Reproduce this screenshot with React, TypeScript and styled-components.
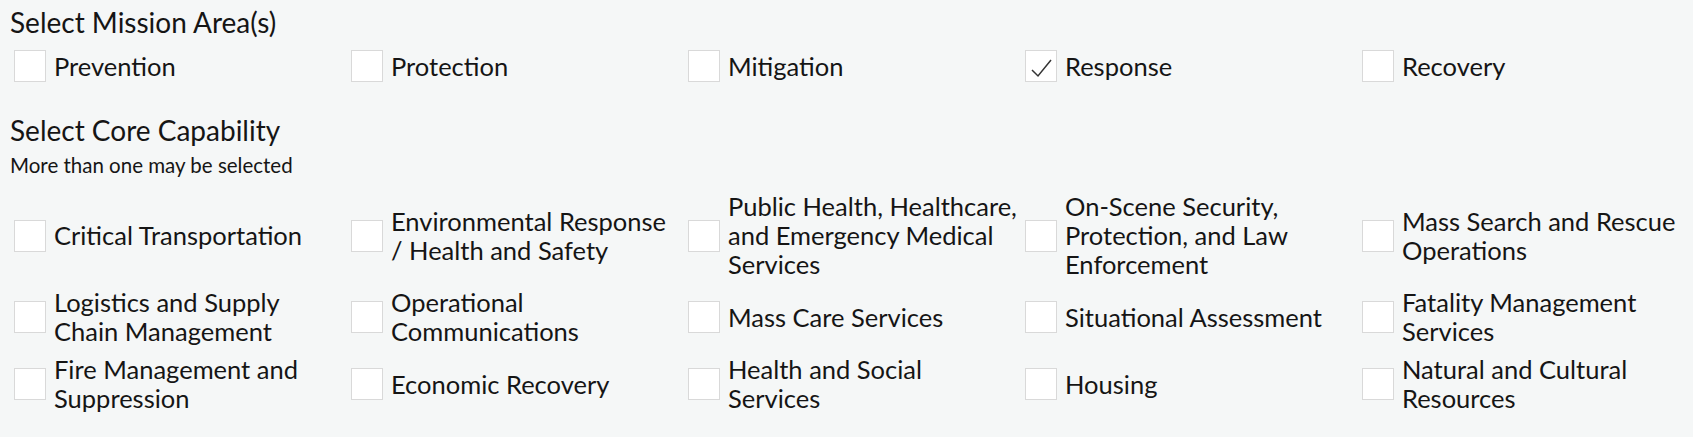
import React, { useState } from 'react';
import styled, { createGlobalStyle } from 'styled-components';

const GlobalStyle = createGlobalStyle`
  body {
    margin: 0;
    background: #f5f7f7;
    font-family: Lato, "Noto Sans", sans-serif;
    color: #151515;
  }
`;

const Page = styled.div`
  padding: 4px 10px 0 10px;
`;

const Heading = styled.div`
  font-size: 28px;
  line-height: 36px;
`;

const Hint = styled.div`
  font-size: 20.5px;
  line-height: 26px;
  margin-top: 4px;
`;

const Grid = styled.div<{ $top: number; $bottom: number }>`
  display: grid;
  grid-template-columns: repeat(5, 337px);
  row-gap: 1px;
  margin-top: ${(p) => p.$top}px;
  margin-bottom: ${(p) => p.$bottom}px;
`;

const Item = styled.label`
  display: flex;
  align-items: center;
  gap: 8px;
  padding: 4px 0;
  cursor: pointer;
`;

const Box = styled.span<{ $on: boolean }>`
  flex: 0 0 auto;
  width: 30px;
  height: 30px;
  margin-left: 4px;
  background: #ffffff;
  border: 1px solid #d9d9d9;
  display: flex;
  align-items: center;
  justify-content: center;
  svg {
    visibility: ${(p) => (p.$on ? 'visible' : 'hidden')};
  }
`;

const Label = styled.span`
  font-size: 25.5px;
  line-height: 29px;
  white-space: pre;
`;

const Check = () => (
  <svg width="30" height="30" viewBox="0 0 30 30">
    <path d="M6 19 L12 25 L25 9" fill="none" stroke="#333" strokeWidth="1.5" />
  </svg>
);

const missionAreas = ['Prevention', 'Protection', 'Mitigation', 'Response', 'Recovery'];

const capabilities = [
  'Critical Transportation',
  'Environmental Response\n/ Health and Safety',
  'Public Health, Healthcare,\nand Emergency Medical\nServices',
  'On-Scene Security,\nProtection, and Law\nEnforcement',
  'Mass Search and Rescue\nOperations',
  'Logistics and Supply\nChain Management',
  'Operational\nCommunications',
  'Mass Care Services',
  'Situational Assessment',
  'Fatality Management\nServices',
  'Fire Management and\nSuppression',
  'Economic Recovery',
  'Health and Social\nServices',
  'Housing',
  'Natural and Cultural\nResources',
];

function CheckItem({ label, on, toggle }: { label: string; on: boolean; toggle: () => void }) {
  return (
    <Item onClick={toggle}>
      <Box $on={on}>
        <Check />
      </Box>
      <Label>{label}</Label>
    </Item>
  );
}

export default function App() {
  const [areas, setAreas] = useState<string[]>(['Response']);
  const [caps, setCaps] = useState<string[]>([]);

  const flip = (list: string[], set: (v: string[]) => void, v: string) =>
    set(list.includes(v) ? list.filter((x) => x !== v) : [...list, v]);

  return (
    <Page>
      <GlobalStyle />
      <Heading>Select Mission Area(s)</Heading>
      <Grid $top={6} $bottom={26}>
        {missionAreas.map((a) => (
          <CheckItem key={a} label={a} on={areas.includes(a)} toggle={() => flip(areas, setAreas, a)} />
        ))}
      </Grid>
      <Heading>Select Core Capability</Heading>
      <Hint>More than one may be selected</Hint>
      <Grid $top={10} $bottom={14}>
        {capabilities.map((c) => (
          <CheckItem key={c} label={c} on={caps.includes(c)} toggle={() => flip(caps, setCaps, c)} />
        ))}
      </Grid>
    </Page>
  );
}
